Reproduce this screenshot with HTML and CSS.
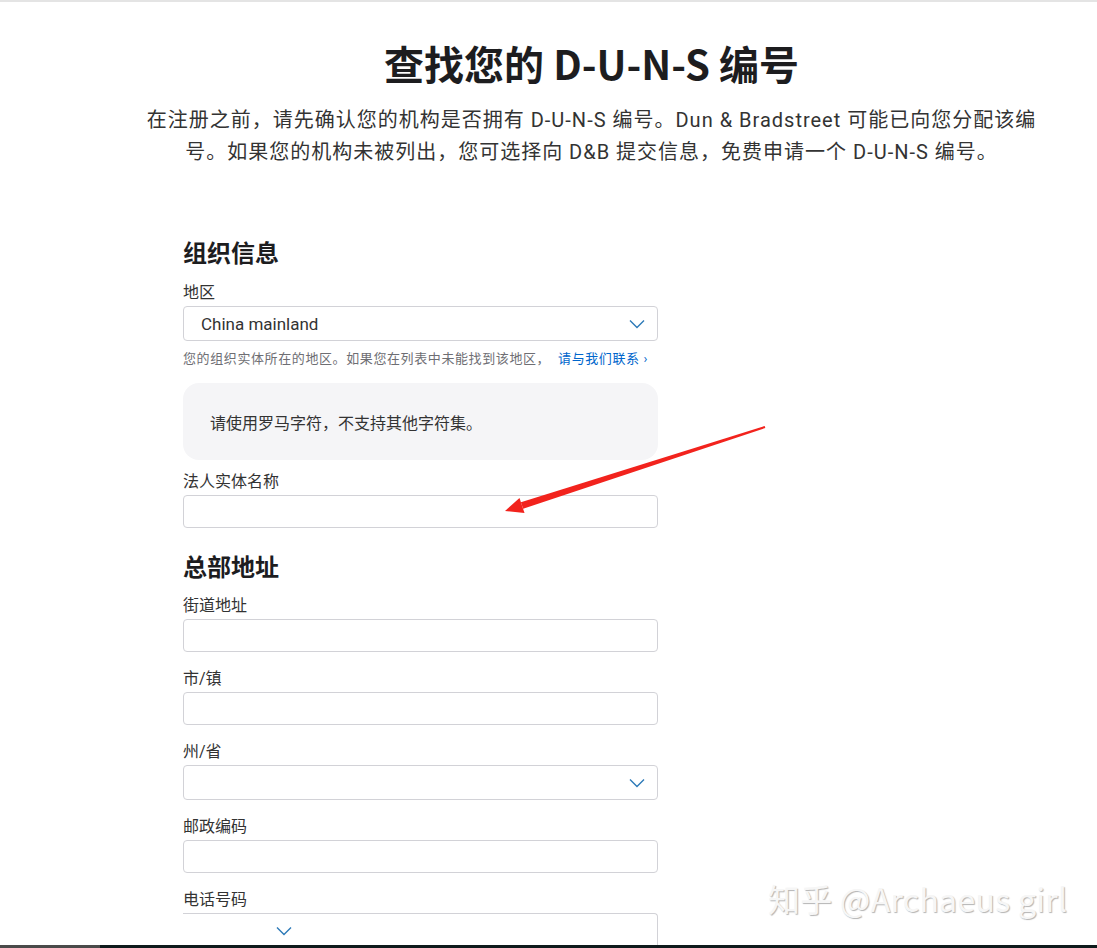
FILE: index.html
```html
<!DOCTYPE html>
<html lang="zh-CN">
<head>
  <meta charset="UTF-8" />
  <meta name="viewport" content="width=device-width, initial-scale=1.0"/>
  <title>查找您的 D-U-N-S 编号</title>
  <link rel="stylesheet" href="styles.css">
</head>
<body>
  <main class="page">
    <header class="intro">
      <h1>查找您的 D-U-N-S 编号</h1>
      <p>在注册之前，请先确认您的机构是否拥有 D-U-N-S 编号。Dun &amp; Bradstreet 可能已向您分配该编号。如果您的机构未被列出，您可选择向 D&amp;B 提交信息，免费申请一个 D-U-N-S 编号。</p>
    </header>

    <form class="duns-form">
      <h2>组织信息</h2>

      <div class="field">
        <label>地区</label>
        <div class="select">
          <span>China mainland</span>
          <svg class="chevron" viewBox="0 0 16 10"><path d="M1 1.5l7 7 7-7"/></svg>
        </div>
        <p class="hint">您的组织实体所在的地区。如果您在列表中未能找到该地区， <a href="#">请与我们联系 ›</a></p>
      </div>

      <div class="notice">请使用罗马字符，不支持其他字符集。</div>

      <div class="field">
        <label>法人实体名称</label>
        <input type="text" />
      </div>

      <h2 class="section-gap">总部地址</h2>

      <div class="field">
        <label>街道地址</label>
        <input type="text" />
      </div>

      <div class="field">
        <label>市/镇</label>
        <input type="text" />
      </div>

      <div class="field">
        <label>州/省</label>
        <div class="select">
          <span></span>
          <svg class="chevron" viewBox="0 0 16 10"><path d="M1 1.5l7 7 7-7"/></svg>
        </div>
      </div>

      <div class="field">
        <label>邮政编码</label>
        <input type="text" />
      </div>

      <div class="field">
        <label>电话号码</label>
        <div class="phone">
          <div class="phone-code">
            <svg class="chevron" viewBox="0 0 16 10"><path d="M1 1.5l7 7 7-7"/></svg>
          </div>
        </div>
      </div>
    </form>
  </main>

  <!-- annotation arrow: tapered shaft + head -->
  <svg class="arrow" width="1097" height="948" viewBox="0 0 1097 948">
    <polygon points="764.7,426 765.3,428 523.1,508.8 520.9,502.2" fill="#f2231d"/>
    <polygon points="505,511 519.5,497.9 524.5,513.1" fill="#f2231d"/>
  </svg>

  <div class="watermark">知乎 @Archaeus girl</div>
  <div class="taskbar"><span class="taskbar-start"></span></div>
</body>
</html>
```

FILE: styles.css
```css
body {
  margin: 0;
  background: #fff;
  color: #333;
  font-family: "Roboto", "Noto Sans CJK SC", sans-serif;
  border-top: 2px solid #e4e4e4;
  overflow: hidden;
  height: 946px;
}

.page {
  width: 1097px;
}

.intro {
  text-align: center;
  padding: 37px 0 0 86px;
}

.intro h1 {
  margin: 0;
  font-family: "Noto Sans CJK SC", sans-serif;
  font-size: 40px;
  line-height: 48px;
  font-weight: 700;
  color: #1d1d1f;
}

.intro p {
  max-width: 900px;
  margin: 17px auto 0;
  font-size: 20px;
  line-height: 32px;
  letter-spacing: 1px;
  color: #333;
}

.duns-form {
  width: 475px;
  margin-left: 183px;
  margin-top: 69px;
}

.duns-form h2 {
  margin: 0 0 16px;
  font-family: "Noto Sans CJK SC", sans-serif;
  font-size: 24px;
  line-height: 30px;
  font-weight: 700;
  color: #1d1d1f;
}

.duns-form h2.section-gap {
  margin-top: 23px;
  margin-bottom: 15px;
}

.field {
  margin-bottom: 17px;
}

.field label {
  display: block;
  font-size: 16px;
  line-height: 20px;
  color: #333;
  margin-bottom: 3px;
}

.field input {
  display: block;
  box-sizing: border-box;
  width: 100%;
  height: 33px;
  border: 1px solid #d2d2d7;
  border-radius: 4px;
  background: #fff;
}

.select {
  box-sizing: border-box;
  display: flex;
  align-items: center;
  justify-content: space-between;
  height: 35px;
  padding: 0 12px 0 17px;
  border: 1px solid #d2d2d7;
  border-radius: 4px;
  font-size: 17px;
  color: #333;
}

.chevron {
  width: 16px;
  height: 10px;
  fill: none;
  stroke: #2d7ab8;
  stroke-width: 1.4;
}

.hint {
  margin: 10px 0 0;
  font-size: 13px;
  line-height: 16px;
  letter-spacing: 0.6px;
  color: #6e6e73;
}

.hint a {
  color: #0066cc;
  text-decoration: none;
  margin-left: 4px;
}

.notice {
  box-sizing: border-box;
  height: 77px;
  margin: -1px 0 12px;
  padding: 0 27px;
  display: flex;
  align-items: center;
  background: #f5f5f7;
  border-radius: 16px;
  font-size: 16px;
  color: #333;
}

.phone {
  height: 40px;
  border-top: 1px solid #d2d2d7;
  border-right: 1px solid #d2d2d7;
  border-radius: 0 4px 0 0;
}

.phone-code {
  width: 202px;
  display: flex;
  justify-content: center;
  padding-top: 12px;
}

.arrow {
  position: absolute;
  left: 0;
  top: 0;
  pointer-events: none;
}

.watermark {
  position: absolute;
  left: 768px;
  top: 876px;
  font-family: "Noto Sans CJK SC", sans-serif;
  font-size: 32px;
  line-height: 44px;
  color: #f6f6f6;
  text-shadow: 1px 1px 1px #b4b4b4;
  letter-spacing: 0.3px;
}

.taskbar {
  position: absolute;
  left: 0;
  bottom: 0;
  width: 100%;
  height: 3px;
  background: #0e1a1b;
}

.taskbar-start {
  display: block;
  width: 100px;
  height: 3px;
  background: #4a4a4a;
}
```
